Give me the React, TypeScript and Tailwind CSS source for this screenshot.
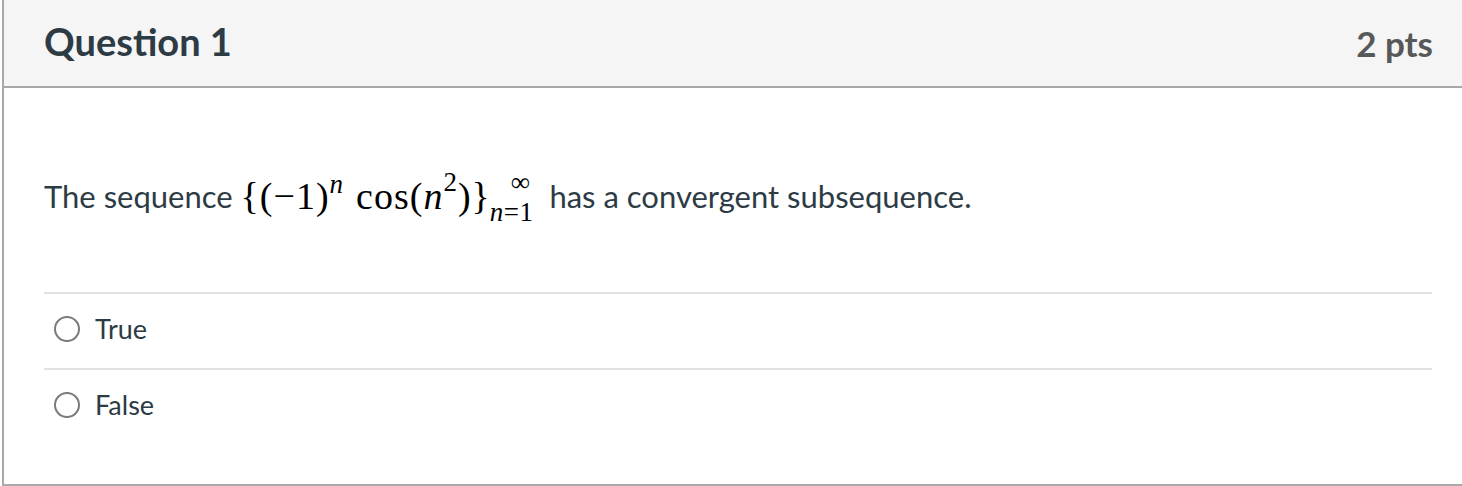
import React from "react";

const Radio = () => (
  <span className="inline-block w-[26px] h-[26px] rounded-full border-2 border-[#7a7a7a] bg-white shrink-0" />
);

export default function App() {
  const serif = { fontFamily: '"Liberation Serif", "Times New Roman", serif' };
  return (
    <div className="w-[1462px] h-[486px] bg-white overflow-hidden" style={{ fontFamily: 'Lato, "Noto Sans", sans-serif' }}>
      <div className="ml-[2px] w-[1470px] h-[486px] border-l-2 border-b-2 border-[#a9a9a9] flex flex-col">
        <div className="h-[88px] bg-[#f5f5f5] border-b-2 border-[#a9a9a9] flex items-center justify-between pl-[40px] pr-[39px] shrink-0">
          <div className="text-[38px] font-bold text-[#2d3b45] relative -top-[2px]">Question 1</div>
          <div className="text-[35px] font-bold text-[#585858]">2 pts</div>
        </div>
        <div className="pl-[40px] pr-[38px] pt-[86px]">
          <div className="flex items-center text-[31px] text-[#2d3b45] h-[44px]">
            <span>The sequence&nbsp;</span>
            <span className="text-[38px] text-black flex items-center tracking-[1px]" style={serif}>
              <span>{"{("}</span>
              <span>−1)</span>
              <span className="italic text-[27px] relative -top-[12px]">n</span>
              <span className="ml-[12px]">cos(</span>
              <span className="italic">n</span>
              <span className="text-[27px] relative -top-[14px]">2</span>
              <span>{")}"}</span>
              <span className="flex flex-col text-[27px] tracking-[0.5px] relative top-[2px]">
                <span className="leading-[22px] ml-[20px] relative -top-[5px]">∞</span>
                <span className="leading-[22px] italic ml-[-1px] relative top-[3px]">n<span className="not-italic">=1</span></span>
              </span>
            </span>
            <span>&nbsp;&nbsp;has a convergent subsequence.</span>
          </div>
          <div className="mt-[74px] w-[1388px]">
            <div className="border-t-2 border-[#e2e2e2] h-[76px] flex items-center pl-[10px] gap-[15px] pb-[4px]">
              <Radio />
              <span className="text-[27px] text-[#2d3b45]">True</span>
            </div>
            <div className="border-t-2 border-[#e2e2e2] h-[76px] flex items-center pl-[10px] gap-[15px] pb-[4px]">
              <Radio />
              <span className="text-[27px] text-[#2d3b45]">False</span>
            </div>
          </div>
        </div>
      </div>
    </div>
  );
}
